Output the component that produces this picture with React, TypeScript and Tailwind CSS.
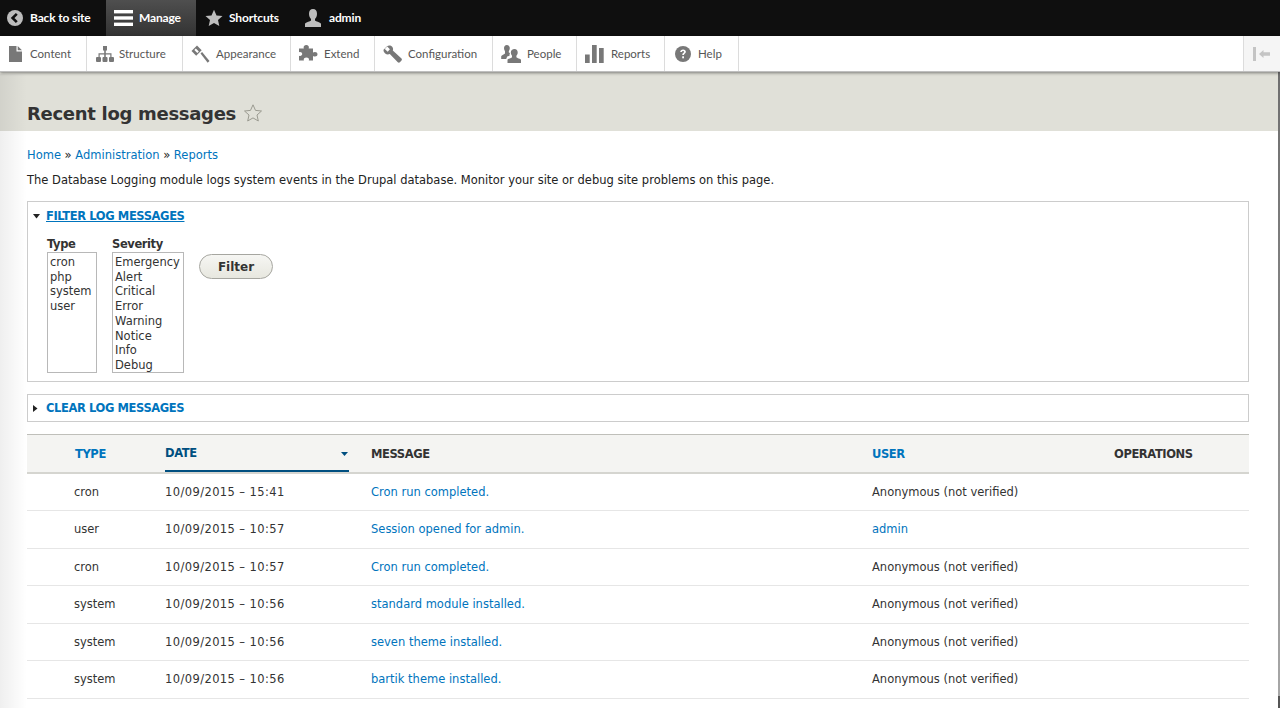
import React from "react";

const link = "text-[#0074bd]";
const body = "font-['DejaVu_Sans','Liberation_Sans',sans-serif]";
const bar = "font-['Lato','Noto_Sans',sans-serif]";

function BackIcon() {
  return (
    <svg width="16" height="16" viewBox="0 0 16 16" className="mr-[7px]">
      <circle cx="8" cy="8" r="8" fill="#bdbdbd" />
      <path d="M9.800 3.800 5.600 8l4.200 4.200" fill="none" stroke="#0f0f0f" strokeWidth="2.600" />
    </svg>
  );
}
function BurgerIcon() {
  return (
    <svg width="19" height="16" viewBox="0 0 19 16" className="mr-[6px]">
      <rect width="19" height="3.400" fill="#fff" />
      <rect y="6.300" width="19" height="3.400" fill="#fff" />
      <rect y="12.600" width="19" height="3.400" fill="#fff" />
    </svg>
  );
}
function StarIcon({ fill = "#bdbdbd", stroke = "none" }: { fill?: string; stroke?: string }) {
  return (
    <svg width="18" height="18" viewBox="0 0 18 18">
      <path d="M9 .8l2.500 5.600 6 .6-4.500 4 1.300 6L9 13.900 3.700 17l1.300-6L.5 7l6-.6z" fill={fill} stroke={stroke} />
    </svg>
  );
}
function UserIcon() {
  return (
    <svg width="18" height="18" viewBox="0 0 18 18" className="mr-[7px]">
      <path d="M9 0c2.600 0 4 2 4 4.700 0 2.300-1 4.300-2 5.300v1.600c0 .8 5.500 1.600 6 3.200V18H1v-3.200c.5-1.600 6-2.400 6-3.200V10C6 9 5 7 5 4.700 5 2 6.400 0 9 0z" fill="#bdbdbd" />
    </svg>
  );
}

const g = "#787878";
const trayIcons: Record<string, React.ReactNode> = {
  Content: (
    <svg width="13" height="16" viewBox="0 0 13 16">
      <path d="M0 0h7.500v5.500H13V16H0z M8.700 0 13 4.300H8.700z" fill={g} />
    </svg>
  ),
  Structure: (
    <svg width="18" height="16" viewBox="0 0 18 16">
      <path d="M7 0h4v4.500H9.800v2.700h5.700V11H17a1 1 0 0 1 1 1v3a1 1 0 0 1-1 1h-3a1 1 0 0 1-1-1v-3a1 1 0 0 1 1-1h.3V8.400H9.800V11h.7a1 1 0 0 1 1 1v3a1 1 0 0 1-1 1h-3a1 1 0 0 1-1-1v-3a1 1 0 0 1 1-1h.7V8.400H3.700V11H4a1 1 0 0 1 1 1v3a1 1 0 0 1-1 1H1a1 1 0 0 1-1-1v-3a1 1 0 0 1 1-1h1.500V7.200h5.700V4.500H7z" fill={g} />
    </svg>
  ),
  Appearance: (
    <svg width="19" height="18" viewBox="0 0 19 18">
      <path d="M6 .5.500 6l4.700 4.700 5.500-5.500z" fill={g} />
      <path d="M4.800 3.500 3.300 5l3 3 1.500-1.500z" fill="#fff" />
      <path d="m9.500 8.500 1.600-1.600 7.400 9.100-1.800 1.800z" fill={g} />
    </svg>
  ),
  Extend: (
    <svg width="19" height="17" viewBox="0 0 19 17">
      <path d="M0 3.500h4.800C4 1.200 5.500 0 7.300 0s3.200 1.200 2.400 3.500H14v4c1.800-1 4.500-.6 4.500 1.800S15.800 12 14 11v4.500H9.800c.8-2-.6-3-2.400-3s-3.200 1-2.500 3H0V10.700c1.800.7 3.200-.3 3.200-1.700S1.800 6.500 0 7.200z" fill={g} />
    </svg>
  ),
  Configuration: (
    <svg width="19" height="18" viewBox="0 0 19 18">
      <path d="M.5 4.800 4 1.200C5.500 0 8 .2 9.200 1.700c1 1.200 1.100 2.700.6 3.900l8.700 7.900c.5.600.5 1.400 0 1.900l-1.600 1.800c-.6.600-1.500.600-2.100 0L6.800 9c-1.700.8-3.300.6-4.600-.6C.9 7.200.4 6.200.5 4.800zM1.800 4l2.900 2.700 2.200-2.400L4.200 1.600z" fill={g} fillRule="evenodd" />
    </svg>
  ),
  People: (
    <svg width="20" height="18" viewBox="0 0 20 18">
      <path d="M5.800 0c1.900 0 3 1.400 3 3.300 0 1.100-.4 2.200-1 3v1.300l1.200.5c-.4.800-.6 1.700-.4 2.700L6.200 11.500 5.200 14H.2v-2.800c.2-1.200 3.600-2 3.800-2.800V6.300c-.6-.8-1-1.900-1-3C3 1.400 4 0 5.800 0z" fill={g} />
      <path d="M13.500 4c2.100 0 3.200 1.500 3.200 3.500 0 1.300-.5 2.400-1.300 3.300v1.400c.4.900 4.300 1.400 4.600 2.600V18H6.500v-3.200c.3-1.200 4.200-1.700 4.500-2.600v-1.400c-.8-.9-1.200-2-1.200-3.300C9.800 5.500 11.400 4 13.500 4z" fill={g} />
    </svg>
  ),
  Reports: (
    <svg width="19" height="18" viewBox="0 0 19 18">
      <rect x="0" y="9.500" width="4.700" height="8.500" fill={g} />
      <rect x="7" y="0" width="4.700" height="18" fill={g} />
      <rect x="14" y="3" width="4.700" height="15" fill={g} />
    </svg>
  ),
  Help: (
    <svg width="16" height="16" viewBox="0 0 16 16">
      <circle cx="8" cy="8" r="8" fill={g} />
      <path d="M5.200 6c0-1.700 1.300-2.600 2.900-2.600 1.700 0 2.800 1 2.800 2.300 0 1.800-2 1.900-2 3.400H7.200c0-2.200 1.900-2.400 1.900-3.400 0-.5-.4-.8-1-.8-.7 0-1.100.4-1.100 1.100z" fill="#fff" />
      <rect x="7.200" y="10.300" width="1.800" height="2" fill="#fff" />
    </svg>
  ),
};

const tray = [
  { t: "Content", w: "w-[87px]", icon: "pl-[9px] pr-[8px]" },
  { t: "Structure", w: "w-[96px]", icon: "pl-[9px] pr-[5px]" },
  { t: "Appearance", w: "w-[108px]", icon: "pl-[8px] pr-[6px]" },
  { t: "Extend", w: "w-[84px]", icon: "pl-[8px] pr-[6px]" },
  { t: "Configuration", w: "w-[118px]", icon: "pl-[8px] pr-[6px]" },
  { t: "People", w: "w-[84px]", icon: "pl-[8px] pr-[6px]" },
  { t: "Reports", w: "w-[88px]", icon: "pl-[8px] pr-[7px]" },
  { t: "Help", w: "w-[74px]", icon: "pl-[10px] pr-[7px]" },
];

const rows = [
  ["cron", "10/09/2015 – 15:41", "Cron run completed.", "Anonymous (not verified)"],
  ["user", "10/09/2015 – 10:57", "Session opened for admin.", "admin"],
  ["cron", "10/09/2015 – 10:57", "Cron run completed.", "Anonymous (not verified)"],
  ["system", "10/09/2015 – 10:56", "standard module installed.", "Anonymous (not verified)"],
  ["system", "10/09/2015 – 10:56", "seven theme installed.", "Anonymous (not verified)"],
  ["system", "10/09/2015 – 10:56", "bartik theme installed.", "Anonymous (not verified)"],
];

function ListBox({ items, w }: { items: string[]; w: string }) {
  return (
    <div className={`${w} h-[121px] border border-[#b8b8b8] bg-white pl-[2px] pt-[2px] text-[11.500px] leading-[14.700px] text-[#333]`}>
      {items.map((i) => (
        <div key={i}>{i}</div>
      ))}
    </div>
  );
}

export default function App() {
  return (
    <div className={`${body} relative h-[708px] w-[1280px] overflow-hidden bg-white text-[11.500px] text-[#222]`}>
      <div className={`${bar} flex h-[36px] bg-[#0f0f0f] text-[12px] font-bold tracking-[-0.15px] text-white`}>
        <div className="flex h-full w-[106px] items-center pl-[7px]">
          <BackIcon />
          Back to site
        </div>
        <div className="flex h-full w-[90px] items-center bg-gradient-to-b from-[#4f4f4f] to-[#333] pl-[8px]">
          <BurgerIcon />
          Manage
        </div>
        <div className="flex h-full w-[99px] items-center pl-[9px]">
          <span className="mr-[6px] flex"><StarIcon /></span>
          Shortcuts
        </div>
        <div className="flex h-full items-center pl-[9px]">
          <UserIcon />
          admin
        </div>
      </div>

      <div className={`${bar} relative z-10 flex h-[36px] border-b border-[#bfbfbf] bg-white text-[11.500px] text-[#565656] shadow-[0_1px_3px_rgba(0,0,0,0.45)]`}>
        {tray.map((x) => (
          <div key={x.t} className={`${x.w} flex h-full items-center border-r border-[#dcdcdc]`}>
            <span className={`${x.icon} flex`}>{trayIcons[x.t]}</span>
            {x.t}
          </div>
        ))}
        <div className="ml-auto flex h-full w-[37px] items-center justify-center gap-[3px] border-l border-[#dcdcdc] bg-[#f5f5f5] pr-[2px]">
          <span className="h-[14px] w-[3px] bg-[#c4c4c4]" />
          <svg width="11" height="8" viewBox="0 0 11 8"><path d="M0 4l4.500-4v2.300H11v3.400H4.500V8z" fill="#c4c4c4" /></svg>
        </div>
      </div>

      <div className="flex h-[59px] items-center bg-[#e0e0d8] pl-[27px] pt-[23px]">
        <h1 className="text-[18px] font-bold tracking-[-0.3px] text-[#333]">Recent log messages</h1>
        <span className="ml-[8px] flex"><StarIcon fill="none" stroke="#9a9a90" /></span>
      </div>

      <div className="pl-[27px] pr-[31px]">
        <div className="mt-[17px] h-[14px] leading-[14px] text-[#222]">
          <span className={link}>Home</span> » <span className={link}>Administration</span> » <span className={link}>Reports</span>
        </div>
        <p className="mt-[11px] leading-[14px] text-[#222]">
          The Database Logging module logs system events in the Drupal database. Monitor your site or debug site problems on this page.
        </p>

        <section className="mt-[14px] h-[181px] border border-[#ccc] pl-[19px]">
          <div className="flex h-[27px] items-center pt-[2px]">
            <svg width="7" height="5" viewBox="0 0 7 5" className="-ml-[14px] mr-[6px]"><path d="M0 0h7L3.500 4.500z" fill="#222" /></svg>
            <span className={`${link} text-[11.500px] font-bold uppercase tracking-[-0.4px] underline`}>Filter log messages</span>
          </div>
          <div className="mt-[8px] flex">
            <div>
              <div className="h-[15px] text-[11.500px] font-bold leading-[15px] tracking-[-0.4px] text-[#333]">Type</div>
              <ListBox w="w-[50px]" items={["cron", "php", "system", "user"]} />
            </div>
            <div className="ml-[15px]">
              <div className="h-[15px] text-[11.500px] font-bold leading-[15px] tracking-[-0.4px] text-[#333]">Severity</div>
              <ListBox w="w-[72px]" items={["Emergency", "Alert", "Critical", "Error", "Warning", "Notice", "Info", "Debug"]} />
            </div>
            <button className="ml-[15px] mt-[17px] h-[25px] w-[74px] rounded-[20px] border border-[#a6a6a0] bg-gradient-to-b from-[#f6f6f3] to-[#e7e7df] text-[12px] font-bold text-[#333]">
              Filter
            </button>
          </div>
        </section>

        <section className="mt-[12px] flex h-[28px] items-center border border-[#ccc] pl-[5px] pt-[2px]">
          <svg width="5" height="7" viewBox="0 0 5 7" className="mr-[8px] -mt-[2px]"><path d="M0 0l4.500 3.500L0 7z" fill="#222" /></svg>
          <span className={`${link} text-[11.500px] font-bold uppercase tracking-[-0.4px]`}>Clear log messages</span>
        </section>

        <table className="mt-[12px] w-[1222px] table-fixed border-collapse">
          <colgroup>
            <col className="w-[127px]" />
            <col className="w-[206px]" />
            <col className="w-[501px]" />
            <col className="w-[242px]" />
            <col />
          </colgroup>
          <thead>
            <tr className="h-[38px] border-t border-b-2 border-t-[#bfbfba] border-b-[#d5d5d0] bg-[#f4f4f2] text-left text-[11.500px] font-bold uppercase tracking-[-0.4px]">
              <th className={`${link} pl-[48px] pt-[2px] font-bold`}>Type</th>
              <th className="px-[11px] font-bold">
                <div className="flex h-[37px] items-center justify-between border-b-2 border-[#004f80] pr-[1px] pt-[3px] text-[#004f80]">
                  Date
                  <svg width="7" height="4" viewBox="0 0 7 4"><path d="M0 0h7L3.500 4z" fill="#004f80" /></svg>
                </div>
              </th>
              <th className="pl-[11px] pt-[2px] font-bold text-[#333]">Message</th>
              <th className={`${link} pl-[11px] pt-[2px] font-bold`}>User</th>
              <th className="pl-[11px] pt-[2px] font-bold text-[#333]">Operations</th>
            </tr>
          </thead>
          <tbody>
            {rows.map((r, i) => (
              <tr key={i} className="h-[37.500px] border-b border-[#e6e6e6] text-[#333]">
                <td className="pl-[47px] pt-[1px]">{r[0]}</td>
                <td className="pl-[11px] pt-[1px] tracking-[0.4px]">{r[1]}</td>
                <td className={`${link} pl-[11px] pt-[1px]`}>{r[2]}</td>
                <td className={`pl-[11px] pt-[1px] ${r[3] === "admin" ? link : ""}`}>{r[3]}</td>
                <td />
              </tr>
            ))}
          </tbody>
        </table>
      </div>

      <div className="pointer-events-none absolute bottom-0 left-0 top-[74px] w-[27px] bg-gradient-to-r from-[#00000010] to-transparent" />
      <div className="absolute bottom-0 right-0 top-[72px] w-[2px] bg-gradient-to-b from-[#6e6e6e] to-[#a8a8a8]" />
      <div className="absolute bottom-0 right-0 h-[12px] w-[2px] bg-[#555]" />
    </div>
  );
}
